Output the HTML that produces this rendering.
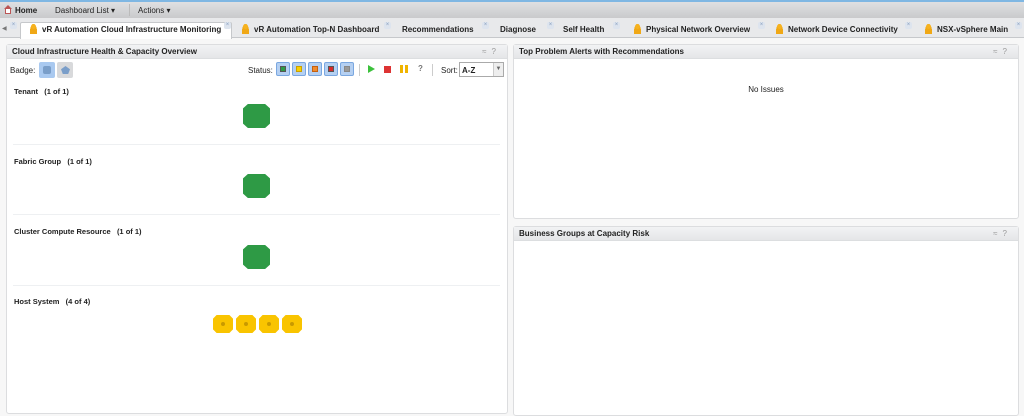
<!DOCTYPE html>
<html><head><meta charset="utf-8"><style>
*{margin:0;padding:0;box-sizing:border-box}
body{width:1024px;height:407px;overflow:hidden;background:#f7f7f7;font-family:"Liberation Sans",sans-serif;font-size:8px;color:#222;position:relative}
.a{position:absolute}
.tab{position:absolute;top:20px;height:18px;font-weight:bold;font-size:8px;line-height:20px;white-space:nowrap}
.x{position:absolute;top:22px;width:7px;height:7px;border-radius:2px;background:#dde4ee;color:#8aa0c0;font-size:6px;line-height:7px;text-align:center}
.man{display:inline-block;width:7px;height:10px;vertical-align:-2px;margin-right:5px;background:radial-gradient(circle at 50% 25%,#f6b21e 2.3px,transparent 2.5px),radial-gradient(ellipse at 50% 85%,#f0a816 3.5px,transparent 3.7px)}
.panel{position:absolute;background:#fff;border:1px solid #dcdddf;border-radius:3px}
.ph{height:14px;background:linear-gradient(#f2f3f4,#e5e6e8);border-bottom:1px solid #dcdee0;font-weight:bold;font-size:8px;line-height:14px;padding-left:5px;position:relative}
.ph i{position:absolute;right:6px;top:0;font-style:normal;color:#999;font-weight:normal;letter-spacing:5px}
.oct{position:absolute;width:27px;height:24px;background:#2e9a45;clip-path:polygon(18% 0,82% 0,100% 18%,100% 82%,82% 100%,18% 100%,0 82%,0 18%)}
.y{position:absolute;top:315px;width:20px;height:18px;background:#f9c400;clip-path:polygon(18% 0,82% 0,100% 20%,100% 80%,82% 100%,18% 100%,0 80%,0 20%)}
.y:after{content:"";position:absolute;left:8px;top:7px;width:4px;height:4px;border-radius:2px;background:#c89a00}
.lbl{position:absolute;left:14px;font-weight:bold;font-size:7.5px}
.sep{position:absolute;left:13px;width:487px;height:1px;background:#eef0f2}
.sb{position:absolute;top:62px;width:14px;height:14px;border:1px solid #7aa7e0;background:#b5d0f2;border-radius:2px}
.sb span{position:absolute;left:3px;top:3px;width:6px;height:6px;border:1px solid #555}
</style></head><body>
<div class="a" style="left:0;top:0;width:1024px;height:2px;background:#7fb7e3"></div>
<div class="a" style="left:0;top:2px;width:1024px;height:16px;background:linear-gradient(#dfe0e2,#c9cacc)"></div>
<div class="a" style="left:4px;top:5px;width:8px;height:9px"><div style="width:8px;height:4px;background:#b55;clip-path:polygon(50% 0,100% 100%,0 100%)"></div><div style="margin-left:1px;width:6px;height:5px;border:1px solid #b55;border-top:none;background:#fff"></div></div>
<div class="a" style="left:15px;top:6px;font-weight:bold">Home</div>
<div class="a" style="left:55px;top:6px">Dashboard List &#9662;</div>
<div class="a" style="left:129px;top:4px;width:1px;height:12px;background:#bbb"></div>
<div class="a" style="left:138px;top:6px">Actions &#9662;</div>
<div class="a" style="left:0;top:18px;width:1024px;height:20px;background:#e8e9eb;border-bottom:1px solid #c6c8cb"></div>
<div class="a" style="left:2px;top:25px;font-size:6px;color:#777">&#9664;</div>
<div class="x" style="left:10px">×</div>
<div class="a" style="left:20px;top:22px;width:212px;height:17px;background:#fff;border:1px solid #c6c8cb;border-bottom:none;border-radius:2px 2px 0 0"></div>
<div class="tab" style="left:30px"><span class="man"></span>vR Automation Cloud Infrastructure Monitoring</div>
<div class="x" style="left:224px">×</div>
<div class="tab" style="left:242px"><span class="man"></span>vR Automation Top-N Dashboard</div>
<div class="x" style="left:384px">×</div>
<div class="tab" style="left:402px">Recommendations</div>
<div class="x" style="left:482px">×</div>
<div class="tab" style="left:500px">Diagnose</div>
<div class="x" style="left:547px">×</div>
<div class="tab" style="left:563px">Self Health</div>
<div class="x" style="left:613px">×</div>
<div class="tab" style="left:634px"><span class="man"></span>Physical Network Overview</div>
<div class="x" style="left:758px">×</div>
<div class="tab" style="left:776px"><span class="man"></span>Network Device Connectivity</div>
<div class="x" style="left:905px">×</div>
<div class="tab" style="left:925px"><span class="man"></span>NSX-vSphere Main</div>
<div class="x" style="left:1015px">×</div>

<div class="panel" style="left:6px;top:44px;width:502px;height:370px">
<div class="ph">Cloud Infrastructure Health &amp; Capacity Overview<i>≈?</i></div>
</div>
<div class="a" style="left:10px;top:66px">Badge:</div>
<div class="a" style="left:39px;top:62px;width:16px;height:16px;background:#a9c9f0;border-radius:2px"><div style="margin:4px;width:8px;height:8px;border-radius:2px;background:#7a9ec9"></div></div>
<div class="a" style="left:57px;top:62px;width:16px;height:16px;background:#d8d9db;border-radius:2px"><div style="margin:4px;width:9px;height:8px;background:#7a9ec9;clip-path:polygon(50% 0,100% 40%,80% 100%,20% 100%,0 40%)"></div></div>
<div class="a" style="left:248px;top:66px">Status:</div>
<div class="sb" style="left:276px"><span style="background:#2e9a45"></span></div>
<div class="sb" style="left:292px"><span style="background:#f9d000;border-color:#c9a000"></span></div>
<div class="sb" style="left:308px"><span style="background:#f08b2d;border-color:#c46010"></span></div>
<div class="sb" style="left:324px"><span style="background:#d62a2a"></span></div>
<div class="sb" style="left:340px"><span style="background:#999;border-color:#888"></span></div>
<div class="a" style="left:359px;top:64px;width:1px;height:12px;background:#ccc"></div>
<div class="a" style="left:368px;top:65px;width:0;height:0;border-left:7px solid #3cc13c;border-top:4.5px solid transparent;border-bottom:4.5px solid transparent"></div>
<div class="a" style="left:384px;top:66px;width:7px;height:7px;background:#d33"></div>
<div class="a" style="left:400px;top:65px;width:3px;height:8px;background:#f0b400;box-shadow:5px 0 #f0b400"></div>
<div class="a" style="left:418px;top:64px;color:#777;font-weight:bold">?</div>
<div class="a" style="left:432px;top:64px;width:1px;height:12px;background:#ccc"></div>
<div class="a" style="left:441px;top:66px">Sort:</div>
<div class="a" style="left:459px;top:62px;width:45px;height:15px;border:1px solid #aaa;background:#fff;font-size:8px;padding:3px 2px;font-weight:bold">A-Z<span style="position:absolute;right:0;top:0;width:10px;height:13px;border-left:1px solid #ccc;background:#eee;font-size:6px;text-align:center;line-height:13px;color:#666">&#9660;</span></div>

<div class="lbl" style="top:87px">Tenant &nbsp; (1 of 1)</div>
<div class="oct" style="left:243px;top:104px"></div>
<div class="sep" style="top:144px"></div>
<div class="lbl" style="top:157px">Fabric Group &nbsp; (1 of 1)</div>
<div class="oct" style="left:243px;top:174px"></div>
<div class="sep" style="top:214px"></div>
<div class="lbl" style="top:227px">Cluster Compute Resource &nbsp; (1 of 1)</div>
<div class="oct" style="left:243px;top:245px"></div>
<div class="sep" style="top:285px"></div>
<div class="lbl" style="top:297px">Host System &nbsp; (4 of 4)</div>
<div class="y" style="left:213px"></div>
<div class="y" style="left:236px"></div>
<div class="y" style="left:259px"></div>
<div class="y" style="left:282px"></div>

<div class="panel" style="left:513px;top:44px;width:506px;height:175px">
<div class="ph">Top Problem Alerts with Recommendations<i>≈?</i></div>
<div style="text-align:center;margin-top:26px">No Issues</div>
</div>
<div class="panel" style="left:513px;top:226px;width:506px;height:190px">
<div class="ph">Business Groups at Capacity Risk<i>≈?</i></div>
</div>
</body></html>
